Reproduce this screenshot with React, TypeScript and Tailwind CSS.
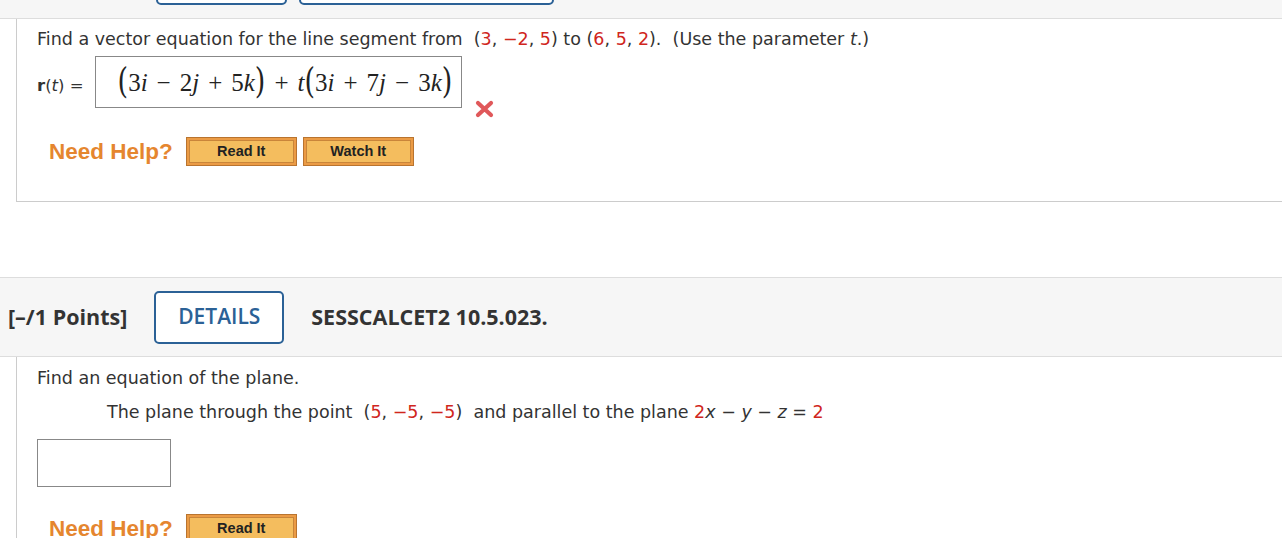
import React from 'react';

function HelpButton({ label }: { label: string }) {
  return (
    <div className="w-[111px] h-[29px] border border-[#b9742f] bg-[#eb9b45] p-[2px]">
      <div className="h-full border border-[#c9853a] bg-[#f4bd5e] flex items-center justify-center text-[14.5px] font-bold text-[#222] font-['Liberation_Sans',Arial,sans-serif]">
        {label}
      </div>
    </div>
  );
}

function NeedHelp({ buttons }: { buttons: string[] }) {
  return (
    <div className="flex items-center gap-[6px] pl-[12px]">
      <span className="text-[22.5px] font-bold text-[#e5862f] font-['Liberation_Sans',Arial,sans-serif] mr-[7px]">Need Help?</span>
      {buttons.map((b) => (
        <HelpButton key={b} label={b} />
      ))}
    </div>
  );
}

const Red = ({ children }: { children: React.ReactNode }) => <span className="text-[#d0261d]">{children}</span>;

const Paren = ({ c }: { c: string }) => (
  <span className="inline-block text-[27px] scale-y-[1.3] -mt-[3px] font-['DejaVu_Serif',serif] font-extralight">{c}</span>
);

function MathExpr() {
  return (
    <div className="flex items-center font-['Liberation_Serif','DejaVu_Serif',serif] text-[25px] text-[#222] leading-none">
      <Paren c="(" />
      <span>3<i>i</i></span>
      <span className="mx-[9px]">−</span>
      <span>2<i>j</i></span>
      <span className="mx-[9px]">+</span>
      <span>5<i>k</i></span>
      <Paren c=")" />
      <span className="mx-[9px]">+</span>
      <i>t</i>
      <Paren c="(" />
      <span>3<i>i</i></span>
      <span className="mx-[9px]">+</span>
      <span>7<i>j</i></span>
      <span className="mx-[9px]">−</span>
      <span>3<i>k</i></span>
      <Paren c=")" />
    </div>
  );
}

export default function App() {
  return (
    <div className="w-[1282px] h-[538px] overflow-hidden bg-white text-[#333] font-['DejaVu_Sans',Verdana,sans-serif]">
      {/* toolbar strip */}
      <div className="h-[19px] bg-[#f6f6f6] border-b border-[#ddd] flex gap-[12px] pl-[156px] overflow-hidden">
        <div className="w-[131px] h-[30px] -mt-[25px] border-2 border-[#2b6196] rounded-[5px] bg-white" />
        <div className="w-[255px] h-[30px] -mt-[25px] border-2 border-[#2b6196] rounded-[5px] bg-white" />
      </div>

      {/* question 1 */}
      <div className="ml-[16px] h-[183px] border-l border-b border-[#ccc] pl-[20px] pt-[9px]">
        <p className="text-[17.5px] leading-[22px]">
          Find a vector equation for the line segment from&nbsp; (<Red>3</Red>, <Red>−2</Red>, <Red>5</Red>) to (<Red>6</Red>, <Red>5</Red>, <Red>2</Red>).&nbsp; (Use the parameter <i>t</i>.)
        </p>
        <div className="flex items-start mt-[6px]">
          <span className="text-[16.5px] mt-[18px] mr-[11px]">
            <b>r</b>(<i>t</i>) =
          </span>
          <div className="w-[367px] h-[52px] border border-[#888] flex items-center pl-[22px]">
            <MathExpr />
          </div>
          <svg className="ml-[13px] mt-[44px]" width="19" height="18" viewBox="0 0 19 18">
            <path d="M3 3 L16 15 M16 3 L3 15" stroke="#e0585a" strokeWidth="4.2" strokeLinecap="round" />
          </svg>
        </div>
        <div className="mt-[17px]">
          <NeedHelp buttons={['Read It', 'Watch It']} />
        </div>
      </div>

      {/* question 2 header */}
      <div className="mt-[75px] h-[80px] bg-[#f6f6f6] border-t border-b border-[#ddd] flex items-center pl-[8px] font-['Open_Sans',sans-serif]">
        <span className="text-[21.5px] font-bold text-[#333]">[–/1 Points]</span>
        <div className="ml-[27px] w-[130px] h-[53px] border-2 border-[#2b6196] rounded-[5px] bg-white flex items-center justify-center text-[21px] text-[#2b6196] font-semibold">
          DETAILS
        </div>
        <span className="ml-[27px] text-[21.5px] font-bold text-[#333]">SESSCALCET2 10.5.023.</span>
      </div>

      {/* question 2 body */}
      <div className="ml-[16px] h-[200px] border-l border-[#ccc] pl-[20px] pt-[10px]">
        <p className="text-[17.5px] leading-[22px]">Find an equation of the plane.</p>
        <p className="text-[17.5px] leading-[22px] mt-[12px] pl-[70px]">
          The plane through the point&nbsp; (<Red>5</Red>, <Red>−5</Red>, <Red>−5</Red>)&nbsp; and parallel to the plane <Red>2</Red><i>x</i> − <i>y</i> − <i>z</i> = <Red>2</Red>
        </p>
        <div className="mt-[16px] w-[134px] h-[48px] border border-[#888]" />
        <div className="mt-[25px]">
          <NeedHelp buttons={['Read It']} />
        </div>
      </div>
    </div>
  );
}
